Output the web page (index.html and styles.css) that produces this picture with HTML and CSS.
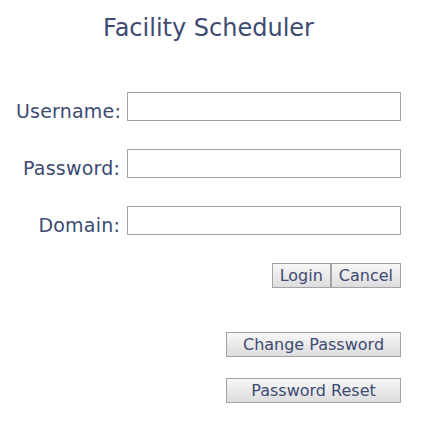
FILE: index.html
```html
<!DOCTYPE html>
<html lang="en">
<head>
<meta charset="utf-8">
<title>Facility Scheduler</title>
<link rel="stylesheet" href="styles.css">
</head>
<body>
<div class="page">
  <h1 class="title">Facility Scheduler</h1>
  <form class="login-form">
    <label class="field-label" for="user">Username:</label>
    <input class="field-input" id="user" type="text">
    <label class="field-label" for="pass">Password:</label>
    <input class="field-input" id="pass" type="password">
    <label class="field-label" for="domain">Domain:</label>
    <input class="field-input" id="domain" type="text">
  </form>
  <div class="actions">
    <button class="btn" type="button">Login</button><button class="btn" type="button">Cancel</button>
  </div>
  <div class="extra">
    <button class="btn btn-wide" type="button">Change Password</button>
    <button class="btn btn-wide" type="button">Password Reset</button>
  </div>
</div>
</body>
</html>
```
FILE: styles.css
```css
html, body {
  margin: 0;
  padding: 0;
  background: #ffffff;
}
body {
  font-family: "DejaVu Sans", Verdana, sans-serif;
  color: #3d4a72;
}
.page {
  width: 385px;
  padding: 13px 0 0 16px;
}
.title {
  margin: 0;
  font-size: 24px;
  font-weight: normal;
  line-height: 30px;
  text-align: center;
}
.login-form {
  margin-top: 49px;
  display: grid;
  grid-template-columns: 105px 1fr;
  column-gap: 6px;
  row-gap: 28px;
}
.field-label {
  font-size: 19px;
  line-height: 19px;
  padding: 10px 1px 0 0;
  height: 19px;
  text-align: right;
  white-space: nowrap;
  letter-spacing: 0.2px;
}
.field-input {
  box-sizing: border-box;
  height: 29px;
  width: 100%;
  margin: 0;
  border: 1px solid #a3a3a3;
  background: #fff;
  outline: none;
}
.actions {
  margin-top: 28px;
  display: flex;
  justify-content: flex-end;
}
.btn {
  box-sizing: border-box;
  height: 25px;
  margin: 0;
  padding: 0 7px;
  border: 1px solid #a3a3a3;
  border-radius: 0;
  background: linear-gradient(#f7f7f7, #dddddd);
  font-family: "DejaVu Sans", Verdana, sans-serif;
  font-size: 16px;
  line-height: 22px;
  color: #3d4a72;
}
.extra {
  margin-top: 44px;
  display: flex;
  flex-direction: column;
  align-items: flex-end;
  gap: 21px;
}
.btn-wide {
  width: 175px;
}
```
